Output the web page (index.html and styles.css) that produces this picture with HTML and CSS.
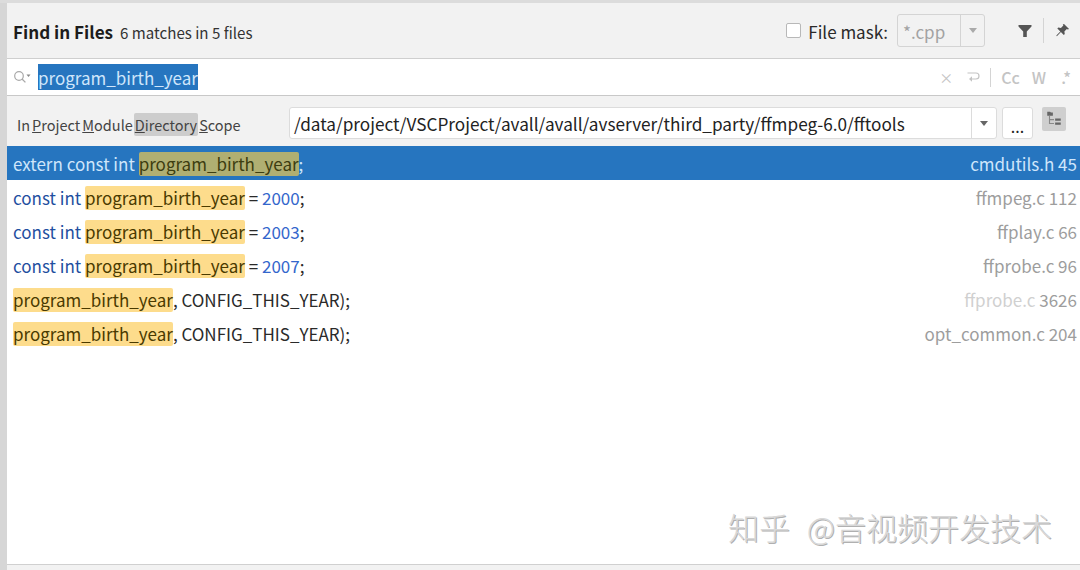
FILE: index.html
```html
<!DOCTYPE html>
<html lang="en">
<head>
<meta charset="utf-8">
<title>Find in Files</title>
<link rel="stylesheet" href="styles.css">
</head>
<body>
<div class="page">
  <div class="strip"></div>
  <main class="dialog">
    <header class="head">
      <span class="title">Find in Files</span>
      <span class="count">6 matches in 5 files</span>
      <span class="grow"></span>
      <span class="check"></span>
      <span class="mask-label">File mask:</span>
      <span class="mask-combo"><span class="mask-value">*.cpp</span><span class="mask-arrow"><i class="tri tri-faint"></i></span></span>
      <svg class="ico-filter" viewBox="0 0 14 14"><path d="M0.5 1h13v1.5L8.8 7.5V13H5.2V7.5L0.5 2.5z" fill="#555"/></svg>
      <span class="vsep"></span>
      <svg class="ico-pin" viewBox="0 0 16 16"><path d="M9.6 1l5.4 5.4-1.4.6-1-.6-2.6 2.6.4 2.8-1 1L6.3 9.7 2 14l-.6-.6 4.3-4.3L2.5 5.8l1-1 2.8.4 2.6-2.6-.6-1z" fill="#555"/></svg>
    </header>
    <section class="search">
      <svg class="ico-search" viewBox="0 0 18 14"><circle cx="6" cy="6" r="4.3" fill="none" stroke="#a8a8a8" stroke-width="1.2"/><path d="M9 9l3.4 3.4" stroke="#a8a8a8" stroke-width="1.3"/><path d="M13.5 4.5h4l-2 2.4z" fill="#888"/></svg>
      <span class="query">program_birth_year</span>
      <span class="grow"></span>
      <span class="opt opt-x">×</span>
      <svg class="ico-wrap" viewBox="0 0 14 12"><path d="M1.5 2H10a2.6 2.6 0 0 1 0 6H4.5" fill="none" stroke="#c4c4c4" stroke-width="1.2"/><path d="M6 5.3L3 8l3 2.7z" fill="#c4c4c4"/></svg>
      <span class="vsep vsep-search"></span>
      <span class="opt opt-cc">Cc</span>
      <span class="opt opt-w">W</span>
      <span class="opt opt-re">.*</span>
    </section>
    <section class="scope">
      <nav class="tabs">
        <span class="tab">In</span>
        <span class="tab"><u>P</u>roject</span>
        <span class="tab"><u>M</u>odule</span>
        <span class="tab tab-on"><u>D</u>irectory</span>
        <span class="tab"><u>S</u>cope</span>
      </nav>
      <span class="grow"></span>
      <span class="path-combo"><span class="path-value">/data/project/VSCProject/avall/avall/avserver/third_party/ffmpeg-6.0/fftools</span><span class="path-arrow"><i class="tri"></i></span></span>
      <span class="dots">...</span>
      <span class="tree-btn"><svg viewBox="0 0 16 16"><path d="M2 1.5h2.5l.8.8H7v2.7H2z" fill="#666"/><path d="M4 5v7h4M4 8.5h4" fill="none" stroke="#888"/><path d="M9 7.5h5v2H9zM9 11h5v2H9z" fill="#666"/></svg></span>
    </section>
    <section class="results">
      <div class="row row-on"><span class="code">extern const int <mark class="hit hit-on">program_birth_year</mark>;</span><span class="loc">cmdutils.h 45</span></div>
      <div class="row"><span class="code"><b class="kw">const int</b> <mark class="hit">program_birth_year</mark> = <b class="num">2000</b>;</span><span class="loc">ffmpeg.c 112</span></div>
      <div class="row"><span class="code"><b class="kw">const int</b> <mark class="hit">program_birth_year</mark> = <b class="num">2003</b>;</span><span class="loc">ffplay.c 66</span></div>
      <div class="row"><span class="code"><b class="kw">const int</b> <mark class="hit">program_birth_year</mark> = <b class="num">2007</b>;</span><span class="loc">ffprobe.c 96</span></div>
      <div class="row"><span class="code"><mark class="hit">program_birth_year</mark>, CONFIG_THIS_YEAR);</span><span class="loc"><span class="faded">ffprobe.c</span> 3626</span></div>
      <div class="row"><span class="code"><mark class="hit">program_birth_year</mark>, CONFIG_THIS_YEAR);</span><span class="loc">opt_common.c 204</span></div>
      <div class="mark-wrap"><span class="watermark">知乎 @音视频开发技术</span></div>
    </section>
    <footer class="foot"></footer>
  </main>
</div>
</body>
</html>
```
FILE: styles.css
```css
* { box-sizing: border-box; }
html, body { margin: 0; height: 100%; overflow: hidden; }
body { font-family: "Noto Sans CJK SC", "Noto Sans", sans-serif; background: #fff; color: #222; }
.page { display: flex; flex-direction: column; width: 1080px; height: 570px; }
.strip { height: 3px; background: #dcdcdc; flex: none; }
.dialog { flex: 1; display: flex; flex-direction: column; border-left: 7px solid #d6d6d6; min-height: 0; }
.grow { flex: 1; }
.head { height: 56px; flex: none; display: flex; align-items: center; background: #f2f2f2; padding: 0 10px 0 6px; border-bottom: 1px solid #cfcfcf; }
.title { font-size: 17.1px; font-weight: 700; color: #1c1c1c; padding-top: 2px; }
.count { font-size: 15.1px; color: #333; margin-left: 7px; padding-top: 2px; }
.check { width: 15px; height: 15px; background: #fff; border: 1px solid #b8b8b8; border-radius: 2px; margin-right: 7px; }
.mask-label { font-size: 17px; color: #2a2a2a; margin-right: 9px; padding-top: 2px; }
.mask-combo { display: flex; width: 88px; height: 33px; border: 1px solid #d4d4d4; border-radius: 3px; margin-right: 33px; background: #f2f2f2; }
.mask-value { width: 63px; font-size: 17px; line-height: 33px; color: #a2a2a2; padding-left: 5px; border-right: 1px solid #d4d4d4; }
.mask-arrow { flex: 1; display: flex; align-items: center; justify-content: center; }
.tri { width: 0; height: 0; border: 4px solid transparent; border-top: 5px solid #666; border-bottom: 0; }
.tri-faint { border-top-color: #aaa; }
.ico-filter { width: 14px; height: 14px; flex: none; }
.vsep { width: 1px; height: 25px; background: #d4d4d4; margin: 0 11px; flex: none; }
.ico-pin { width: 15px; height: 15px; flex: none; }
.search { height: 37px; flex: none; display: flex; align-items: center; background: #fff; padding: 0 9px 0 6px; border-bottom: 1px solid #c8c8c8; }
.ico-search { width: 18px; height: 14px; margin-right: 7px; flex: none; }
.query { font-size: 17px; line-height: 25px; padding-top: 1px; background: #2675bf; color: #cfe6fb; }
.opt { color: #c4c4c4; font-size: 16px; font-weight: 500; }
.opt-x { font-weight: 400; font-size: 14px; }
.ico-wrap { width: 14px; height: 12px; margin-left: 13px; flex: none; }
.vsep-search { height: 19px; margin: 0 10px; }
.opt-w { margin-left: 12px; }
.opt-re { margin-left: 15px; }
.scope { height: 50px; flex: none; display: flex; align-items: center; background: #f2f2f2; padding: 4px 14px 0 9px; }
.tabs { display: flex; align-self: flex-end; height: 23px; margin-bottom: 10px; align-items: center; font-size: 14.5px; color: #444; }
.tab { padding: 0 1px; }
.tab-on { background: #cdcdcd; border-radius: 2px; align-self: stretch; line-height: 23px; }
.path-combo { display: flex; width: 708px; height: 32px; background: #fff; border: 1px solid #dcdcdc; border-radius: 3px; margin-right: 5px; }
.path-value { flex: 1; font-size: 17.2px; line-height: 32px; padding-left: 4px; white-space: nowrap; color: #222; border-right: 1px solid #dcdcdc; }
.path-arrow { width: 24px; display: flex; align-items: center; justify-content: center; }
.dots { width: 31px; height: 32px; background: #fff; border: 1px solid #dcdcdc; border-radius: 3px; margin-right: 9px; text-align: center; font-size: 16px; line-height: 36px; }
.tree-btn { width: 24px; height: 24px; background: #cfcfcf; border-radius: 2px; display: flex; align-items: center; justify-content: center; align-self: flex-start; margin-top: 7px; }
.tree-btn svg { width: 18px; height: 18px; }
.results { flex: 1; display: flex; flex-direction: column; background: #fff; min-height: 0; }
.row { height: 34px; flex: none; display: flex; align-items: center; justify-content: space-between; padding: 0 3px 0 6px; font-size: 17px; color: #2a2a2a; }
.code { white-space: pre; line-height: 24px; padding-top: 2px; }
.kw { font-weight: 400; color: #1f4fa0; }
.num { font-weight: 400; color: #3366cc; }
.hit { display: inline-block; line-height: 24px; background: #fddc8c; color: #4a3a00; border-radius: 2px; }
.loc { color: #9d9d9d; }
.faded { color: #d0d0d0; }
.row-on { background: #2675bf; color: #cfe6fb; }
.row-on .loc { color: #cfe6fb; }
.hit-on { background: #b0af72; color: #3d3d10; }
.mark-wrap { flex: 1; display: flex; align-items: flex-end; justify-content: flex-end; padding: 0 28px 20px 0; }
.watermark { font-size: 31px; line-height: 34px; word-spacing: 10px; color: #d8d8d8; text-shadow: 1px 1px 0 #b0b0b0; font-family: "Noto Sans CJK SC", sans-serif; font-weight: 300; }
.foot { height: 6px; flex: none; background: #f2f2f2; border-top: 1px solid #d0d0d0; }
```
